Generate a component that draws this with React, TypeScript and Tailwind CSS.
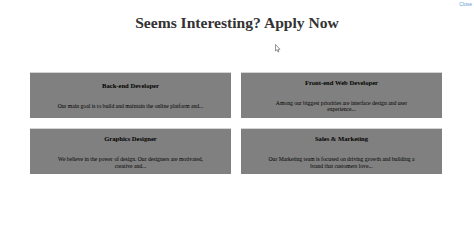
const JOBS = [
  {
    title: "Back-end Developer",
    text: "Our main goal is to build and maintain the online platform and...",
  },
  {
    title: "Front-end Web Developer",
    text: "Among our biggest priorities are interface design and user experience...",
  },
  {
    title: "Graphics Designer",
    text: "We believe in the power of design. Our designers are motivated, creative and...",
  },
  {
    title: "Sales & Marketing",
    text: "Our Marketing team is focused on driving growth and building a brand that customers love...",
  },
];

function JobCard({ title, text }: { title: string; text: string }) {
  return (
    <div className="flex flex-col justify-center border-t border-[#d4d4d4] bg-[#808080] px-[24px] pt-[6px] pb-[5px] text-center text-black">
      <h3 className="text-[6.6px] leading-[8px] font-bold">{title}</h3>
      <p className="mt-[12.5px] text-[5.65px] leading-[6.7px]">{text}</p>
    </div>
  );
}

export default function App() {
  return (
    <div
      className="relative h-[217px] w-[474px] overflow-hidden bg-white"
      style={{ fontFamily: '"Liberation Serif", "Times New Roman", serif' }}
    >
      <a
        href="#"
        className="absolute top-[1px] right-[2px] text-[5px] leading-[6px] text-[#5b9bd5]"
        style={{ fontFamily: '"Liberation Sans", Arial, sans-serif' }}
      >
        Close
      </a>

      <h1 className="mt-[15px] text-center text-[15.6px] leading-[16px] font-bold text-[#333]">
        Seems Interesting? Apply Now
      </h1>

      <svg
        className="absolute top-[44px] left-[275px]"
        width="6"
        height="9"
        viewBox="0 0 6 9"
      >
        <path d="M0.5 0.5 L0.5 7 L2 5.6 L3 8 L4 7.6 L3 5.3 L5 5.3 Z" fill="white" stroke="#555" strokeWidth="0.6" />
      </svg>

      <div className="mt-[41px] grid grid-cols-[201px_201px] gap-x-[10px] gap-y-[10.5px] px-[30px]">
        {JOBS.map((job) => (
          <JobCard key={job.title} title={job.title} text={job.text} />
        ))}
      </div>
    </div>
  );
}
